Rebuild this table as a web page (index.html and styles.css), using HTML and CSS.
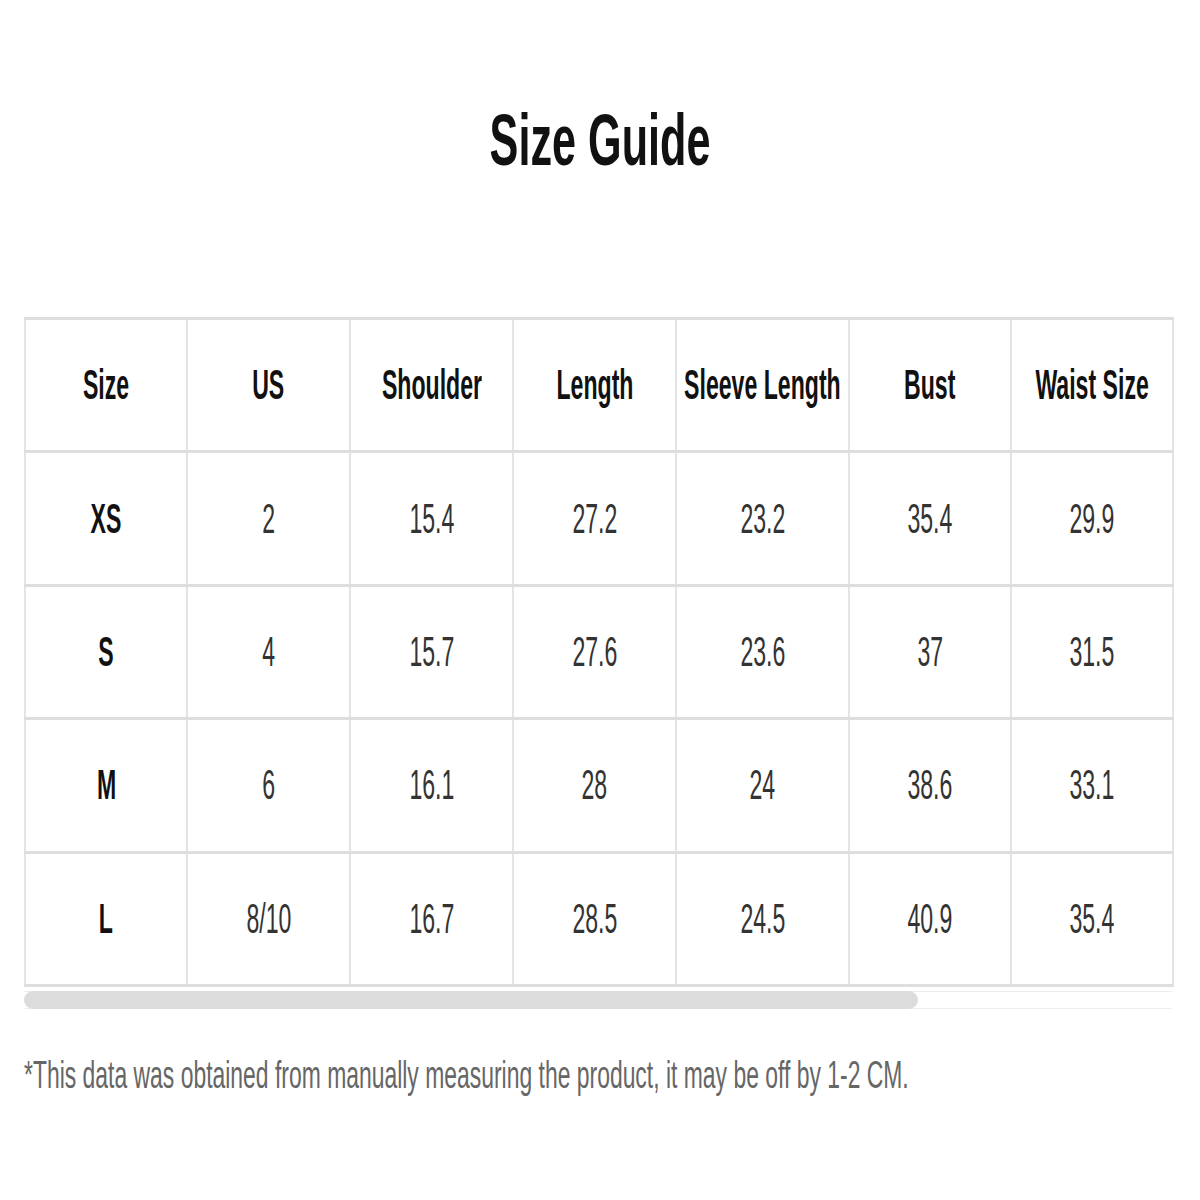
FILE: index.html
```html
<!DOCTYPE html>
<html lang="en">
<head>
<meta charset="utf-8">
<title>Size Guide</title>
<link rel="stylesheet" href="styles.css">
</head>
<body>
<div class="page">
  <h1 class="title"><span class="sq">Size Guide</span></h1>
  <div class="table-wrap">
    <table class="sizes">
      <colgroup>
        <col class="c1"><col class="c2"><col class="c3"><col class="c4"><col class="c5"><col class="c6"><col class="c7">
      </colgroup>
      <thead>
        <tr>
          <th><div class="cell"><span class="sq">Size</span></div></th>
          <th><div class="cell"><span class="sq">US</span></div></th>
          <th><div class="cell"><span class="sq">Shoulder</span></div></th>
          <th><div class="cell"><span class="sq">Length</span></div></th>
          <th><div class="cell"><span class="sq">Sleeve Length</span></div></th>
          <th><div class="cell"><span class="sq">Bust</span></div></th>
          <th><div class="cell"><span class="sq">Waist Size</span></div></th>
        </tr>
      </thead>
      <tbody>
        <tr>
          <th><div class="cell"><span class="sq">XS</span></div></th>
          <td><div class="cell"><span class="sq">2</span></div></td>
          <td><div class="cell"><span class="sq">15.4</span></div></td>
          <td><div class="cell"><span class="sq">27.2</span></div></td>
          <td><div class="cell"><span class="sq">23.2</span></div></td>
          <td><div class="cell"><span class="sq">35.4</span></div></td>
          <td><div class="cell"><span class="sq">29.9</span></div></td>
        </tr>
        <tr>
          <th><div class="cell"><span class="sq">S</span></div></th>
          <td><div class="cell"><span class="sq">4</span></div></td>
          <td><div class="cell"><span class="sq">15.7</span></div></td>
          <td><div class="cell"><span class="sq">27.6</span></div></td>
          <td><div class="cell"><span class="sq">23.6</span></div></td>
          <td><div class="cell"><span class="sq">37</span></div></td>
          <td><div class="cell"><span class="sq">31.5</span></div></td>
        </tr>
        <tr>
          <th><div class="cell"><span class="sq">M</span></div></th>
          <td><div class="cell"><span class="sq">6</span></div></td>
          <td><div class="cell"><span class="sq">16.1</span></div></td>
          <td><div class="cell"><span class="sq">28</span></div></td>
          <td><div class="cell"><span class="sq">24</span></div></td>
          <td><div class="cell"><span class="sq">38.6</span></div></td>
          <td><div class="cell"><span class="sq">33.1</span></div></td>
        </tr>
        <tr>
          <th><div class="cell"><span class="sq">L</span></div></th>
          <td><div class="cell"><span class="sq">8/10</span></div></td>
          <td><div class="cell"><span class="sq">16.7</span></div></td>
          <td><div class="cell"><span class="sq">28.5</span></div></td>
          <td><div class="cell"><span class="sq">24.5</span></div></td>
          <td><div class="cell"><span class="sq">40.9</span></div></td>
          <td><div class="cell"><span class="sq">35.4</span></div></td>
        </tr>
      </tbody>
    </table>
    <div class="scrollbar"><div class="thumb"></div></div>
  </div>
  <p class="note"><span class="sq">*This data was obtained from manually measuring the product, it may be off by 1-2 CM.</span></p>
</div>
</body>
</html>
```
FILE: styles.css
```css
html, body {
  margin: 0;
  padding: 0;
  background: #ffffff;
  overflow: hidden;
}

.page {
  width: 1200px;
  font-family: "Liberation Sans", Arial, sans-serif;
}

.sq {
  display: inline-block;
  flex: none;
  transform: scaleX(0.55);
  transform-origin: center center;
  white-space: nowrap;
}

.title {
  margin: 90px 0 0 0;
  height: 100px;
  line-height: 100px;
  text-align: center;
  font-size: 72px;
  font-weight: 700;
  color: #111111;
}

.title .sq {
  transform: scaleX(0.6);
}

.table-wrap {
  margin-top: 127px;
  padding-left: 24px;
}

.sizes {
  width: 1148px;
  table-layout: fixed;
  border-collapse: collapse;
}

.c1 { width: 162px; }
.c2 { width: 163px; }
.c3 { width: 163px; }
.c4 { width: 163px; }
.c5 { width: 173px; }
.c6 { width: 162px; }
.c7 { width: 162px; }

.sizes th,
.sizes td {
  height: 130.4px;
  padding: 0;
  text-align: center;
  vertical-align: middle;
  border-top: 3px solid #dedede;
  border-bottom: 3px solid #dedede;
  border-left: 2px solid #e4e4e4;
  border-right: 2px solid #e4e4e4;
  font-size: 42px;
  line-height: 48px;
  white-space: nowrap;
}

.cell {
  display: flex;
  justify-content: center;
  align-items: center;
  overflow: hidden;
}

.sizes th {
  font-weight: 700;
  color: #111111;
}

.sizes td {
  font-weight: 400;
  color: #333333;
}

.scrollbar {
  width: 1148px;
  height: 18px;
  margin-top: 4px;
  border-top: 1px solid #eeeeee;
  border-bottom: 1px solid #eeeeee;
  box-sizing: border-box;
}

.thumb {
  width: 894px;
  height: 18px;
  margin-top: -1px;
  border-radius: 9px;
  background: #dcdcdc;
}

.note {
  margin: 44px 0 0 24px;
  width: 1148px;
  line-height: 44px;
  font-size: 38px;
  color: #666666;
  overflow: hidden;
}

.note .sq {
  transform: scaleX(0.603);
  transform-origin: left center;
}
```
